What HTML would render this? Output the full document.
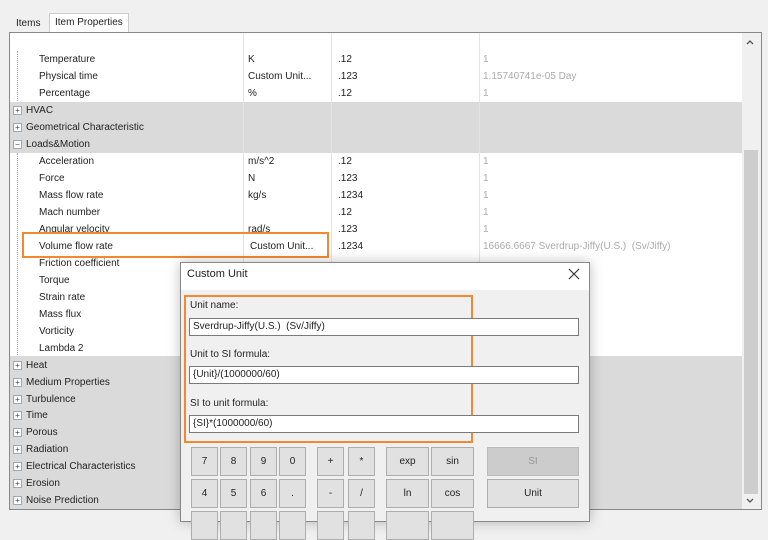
<!DOCTYPE html>
<html><head><style>
*{box-sizing:border-box;margin:0;padding:0}
body{width:768px;height:519px;overflow:hidden;background:#f0f0f0;font-family:"Liberation Sans",sans-serif;font-size:10px;color:#222;position:relative}
.a{position:absolute}
.tab{position:absolute;top:13px;height:20px;font-size:10px;line-height:18px;padding:0 5px}
.row{position:absolute;left:10px;width:732px;height:17px;line-height:17px}
.row span{position:absolute;white-space:nowrap}
.g{background:#dadada}
.pl{position:absolute;width:9px;height:9px;border:1px solid #9ab;background:#fff;left:3px;top:4px;font-size:8px;line-height:7px;text-align:center;color:#346}
.btn{position:absolute;background:#e1e1e1;border:1px solid #adadad;text-align:center;line-height:27px;font-size:10px;height:29px}
.inp{position:absolute;left:189px;width:390px;height:18px;background:#fff;border:1px solid #7a7a7a;line-height:16px;padding-left:3px;font-size:10px;white-space:nowrap}
.lab{position:absolute;left:190px;font-size:10px}
</style></head><body>
<div class="tab" style="left:11px;top:15px;height:18px">Items</div>
<div class="tab" style="left:49px;background:#fff;border:1px solid #ccc;border-bottom:none">Item Properties</div>
<div class="a" style="left:9px;top:32px;width:753px;height:478px;border:1px solid #888;background:#fff"></div>
<div class="a g" style="left:10px;top:102px;width:732px;height:51px"></div>
<div class="a g" style="left:10px;top:356px;width:732px;height:153px"></div>
<div class="a" style="left:243px;top:33px;width:1px;height:476px;background:#e4e4e4"></div>
<div class="a" style="left:331px;top:33px;width:1px;height:476px;background:#e4e4e4"></div>
<div class="a" style="left:479px;top:33px;width:1px;height:476px;background:#e4e4e4"></div>
<div class="a" style="left:742px;top:33px;width:19px;height:476px;background:#f0f0f0"></div>
<div class="a" style="left:744px;top:150px;width:14px;height:344px;background:#cdcdcd"></div>
<svg class="a" style="left:745px;top:38px" width="10" height="8"><path d="M2 6 L5 3 L8 6" fill="none" stroke="#555" stroke-width="1.3"/></svg>
<svg class="a" style="left:745px;top:497px" width="10" height="8"><path d="M2 2 L5 5 L8 2" fill="none" stroke="#555" stroke-width="1.3"/></svg>
<div class="a" style="left:17px;top:51px;width:0;height:50px;border-left:1px dotted #aaa"></div>
<div class="a" style="left:17px;top:153px;width:0;height:202px;border-left:1px dotted #aaa"></div>

<div class="row" style="top:51px"><span style="left:29px">Temperature</span><span style="left:238px">K</span><span style="left:328px">.12</span><span style="left:473px;color:#aaa">1</span></div>
<div class="row" style="top:68px"><span style="left:29px">Physical time</span><span style="left:238px">Custom Unit...</span><span style="left:328px">.123</span><span style="left:473px;color:#aaa">1.15740741e-05 Day</span></div>
<div class="row" style="top:85px"><span style="left:29px">Percentage</span><span style="left:238px">%</span><span style="left:328px">.12</span><span style="left:473px;color:#aaa">1</span></div>
<div class="row" style="top:102px"><div class="pl">+</div><span style="left:16px">HVAC</span></div>
<div class="row" style="top:119px"><div class="pl">+</div><span style="left:16px">Geometrical Characteristic</span></div>
<div class="row" style="top:136px"><div class="pl">&minus;</div><span style="left:16px">Loads&amp;Motion</span></div>
<div class="row" style="top:153px"><span style="left:29px">Acceleration</span><span style="left:238px">m/s^2</span><span style="left:328px">.12</span><span style="left:473px;color:#aaa">1</span></div>
<div class="row" style="top:170px"><span style="left:29px">Force</span><span style="left:238px">N</span><span style="left:328px">.123</span><span style="left:473px;color:#aaa">1</span></div>
<div class="row" style="top:187px"><span style="left:29px">Mass flow rate</span><span style="left:238px">kg/s</span><span style="left:328px">.1234</span><span style="left:473px;color:#aaa">1</span></div>
<div class="row" style="top:204px"><span style="left:29px">Mach number</span><span style="left:328px">.12</span><span style="left:473px;color:#aaa">1</span></div>
<div class="row" style="top:221px"><span style="left:29px">Angular velocity</span><span style="left:238px">rad/s</span><span style="left:328px">.123</span><span style="left:473px;color:#aaa">1</span></div>
<div class="row" style="top:238px"><span style="left:29px">Volume flow rate</span><span style="left:240px">Custom Unit...</span><span style="left:328px">.1234</span><span style="left:473px;color:#aaa">16666.6667 Sverdrup-Jiffy(U.S.)&nbsp; (Sv/Jiffy)</span></div>
<div class="row" style="top:255px"><span style="left:29px">Friction coefficient</span></div>
<div class="row" style="top:272px"><span style="left:29px">Torque</span></div>
<div class="row" style="top:289px"><span style="left:29px">Strain rate</span></div>
<div class="row" style="top:306px"><span style="left:29px">Mass flux</span></div>
<div class="row" style="top:323px"><span style="left:29px">Vorticity</span></div>
<div class="row" style="top:340px"><span style="left:29px">Lambda 2</span></div>
<div class="row" style="top:357px"><div class="pl">+</div><span style="left:16px">Heat</span></div>
<div class="row" style="top:374px"><div class="pl">+</div><span style="left:16px">Medium Properties</span></div>
<div class="row" style="top:391px"><div class="pl">+</div><span style="left:16px">Turbulence</span></div>
<div class="row" style="top:407px"><div class="pl">+</div><span style="left:16px">Time</span></div>
<div class="row" style="top:424px"><div class="pl">+</div><span style="left:16px">Porous</span></div>
<div class="row" style="top:441px"><div class="pl">+</div><span style="left:16px">Radiation</span></div>
<div class="row" style="top:458px"><div class="pl">+</div><span style="left:16px">Electrical Characteristics</span></div>
<div class="row" style="top:475px"><div class="pl">+</div><span style="left:16px">Erosion</span></div>
<div class="row" style="top:492px"><div class="pl">+</div><span style="left:16px">Noise Prediction</span></div>

<div class="a" style="left:22px;top:232px;width:307px;height:26px;border:2px solid #f08a30"></div>

<div class="a" style="left:180px;top:262px;width:410px;height:260px;background:#f0f0f0;border:1px solid #888;box-shadow:0 0 12px rgba(0,0,0,.25)"></div>
<div class="a" style="left:181px;top:263px;width:408px;height:27px;background:#fff"></div>
<div class="a" style="left:187px;top:268px;font-size:11px">Custom Unit</div>
<svg class="a" style="left:568px;top:268px" width="12" height="12"><path d="M1 1 L11 11 M11 1 L1 11" stroke="#333" stroke-width="1.2"/></svg>
<div class="a" style="left:184px;top:295px;width:289px;height:148px;border:2px solid #f08a30"></div>
<div class="lab" style="top:300px">Unit name:</div>
<div class="inp" style="top:318px">Sverdrup-Jiffy(U.S.)&nbsp; (Sv/Jiffy)</div>
<div class="lab" style="top:349px">Unit to SI formula:</div>
<div class="inp" style="top:366px">{Unit}/(1000000/60)</div>
<div class="lab" style="top:398px">SI to unit formula:</div>
<div class="inp" style="top:415px">{SI}*(1000000/60)</div>

<div class="btn" style="left:191px;top:447px;width:27px">7</div>
<div class="btn" style="left:220px;top:447px;width:27px">8</div>
<div class="btn" style="left:250px;top:447px;width:27px">9</div>
<div class="btn" style="left:279px;top:447px;width:27px">0</div>
<div class="btn" style="left:317px;top:447px;width:27px">+</div>
<div class="btn" style="left:348px;top:447px;width:27px">*</div>
<div class="btn" style="left:386px;top:447px;width:43px">exp</div>
<div class="btn" style="left:431px;top:447px;width:43px">sin</div>
<div class="btn" style="left:487px;top:447px;width:92px;background:#ccc;color:#999;border-color:#bbb">SI</div>
<div class="btn" style="left:191px;top:479px;width:27px">4</div>
<div class="btn" style="left:220px;top:479px;width:27px">5</div>
<div class="btn" style="left:250px;top:479px;width:27px">6</div>
<div class="btn" style="left:279px;top:479px;width:27px">.</div>
<div class="btn" style="left:317px;top:479px;width:27px">-</div>
<div class="btn" style="left:348px;top:479px;width:27px">/</div>
<div class="btn" style="left:386px;top:479px;width:43px">ln</div>
<div class="btn" style="left:431px;top:479px;width:43px">cos</div>
<div class="btn" style="left:487px;top:479px;width:92px">Unit</div>
<div class="btn" style="left:191px;top:511px;width:27px"></div>
<div class="btn" style="left:220px;top:511px;width:27px"></div>
<div class="btn" style="left:250px;top:511px;width:27px"></div>
<div class="btn" style="left:279px;top:511px;width:27px"></div>
<div class="btn" style="left:317px;top:511px;width:27px"></div>
<div class="btn" style="left:348px;top:511px;width:27px"></div>
<div class="btn" style="left:386px;top:511px;width:43px"></div>
<div class="btn" style="left:431px;top:511px;width:43px"></div>
</body></html>
